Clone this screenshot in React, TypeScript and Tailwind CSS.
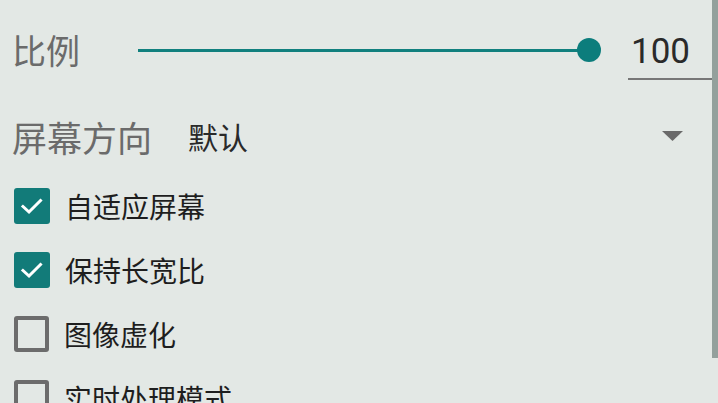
import { useState } from "react"

const FONT = { fontFamily: '"Noto Sans CJK SC", "Noto Sans", Roboto, sans-serif' }

type Option = { label: string; checked: boolean }

const initialOptions: Option[] = [
  { label: "自适应屏幕", checked: true },
  { label: "保持长宽比", checked: true },
  { label: "图像虚化", checked: false },
  { label: "实时处理模式", checked: false },
]

function CheckBox({ checked }: { checked: boolean }) {
  if (checked) {
    return (
      <span className="flex h-[36px] w-[36px] shrink-0 items-center justify-center rounded-[3px] bg-[#127b79]">
        <svg width="26" height="26" viewBox="0 0 26 26" fill="none">
          <path d="M4 13.5 L10 19 L21.5 7.5" stroke="#ffffff" strokeWidth="3" strokeLinecap="square" />
        </svg>
      </span>
    )
  }
  return <span className="h-[36px] w-[35px] shrink-0 rounded-[3px] border-[4px] border-[#6c6c6c]" />
}

export default function App() {
  const [options, setOptions] = useState(initialOptions)

  return (
    <div className="relative h-[403px] w-[718px] overflow-hidden bg-[#e3e8e5]" style={FONT}>
      {/* Scale */}
      <div className="flex h-[100px] items-center pl-[12px]">
        <span className="w-[126px] text-[34px] leading-none text-[#6b6b6b]">比例</span>
        <div className="flex w-[463px] items-center">
          <div className="h-[3px] flex-1 bg-[#11807e]" />
          <div className="-ml-[12px] h-[24px] w-[24px] shrink-0 rounded-full bg-[#0c7d7c]" />
        </div>
        <div className="ml-[27px] w-[90px] border-b-2 border-[#777777] pb-[9px] pl-[3px] pt-[13px]">
          <span className="block text-[35px] leading-[35px] text-[#2a2a2a]" style={{ fontFamily: "Roboto, sans-serif" }}>
            100
          </span>
        </div>
      </div>

      {/* Orientation */}
      <div className="flex h-[72px] items-center pl-[12px] pr-[35px]">
        <span className="w-[176px] text-[35px] leading-none text-[#6b6b6b]">屏幕方向</span>
        <span className="flex-1 text-[30px] leading-none text-[#2a2a2a]">默认</span>
        <svg width="21" height="10" viewBox="0 0 21 10">
          <path d="M0 0 H21 L10.5 10 Z" fill="#6a6a6a" />
        </svg>
      </div>

      {/* Options */}
      <div className="flex flex-col pt-[2px]">
        {options.map((opt, i) => (
          <button
            key={opt.label}
            type="button"
            onClick={() => setOptions((prev) => prev.map((o, j) => (j === i ? { ...o, checked: !o.checked } : o)))}
            className="flex h-[64px] items-center gap-[15px] pl-[14px] text-left"
          >
            <CheckBox checked={opt.checked} />
            <span className="text-[28px] leading-none text-[#1e1e1e]">{opt.label}</span>
          </button>
        ))}
      </div>

      {/* scrollbar */}
      <div className="absolute right-0 top-0 h-[358px] w-[6px] bg-[#93a09c]" />
    </div>
  )
}
